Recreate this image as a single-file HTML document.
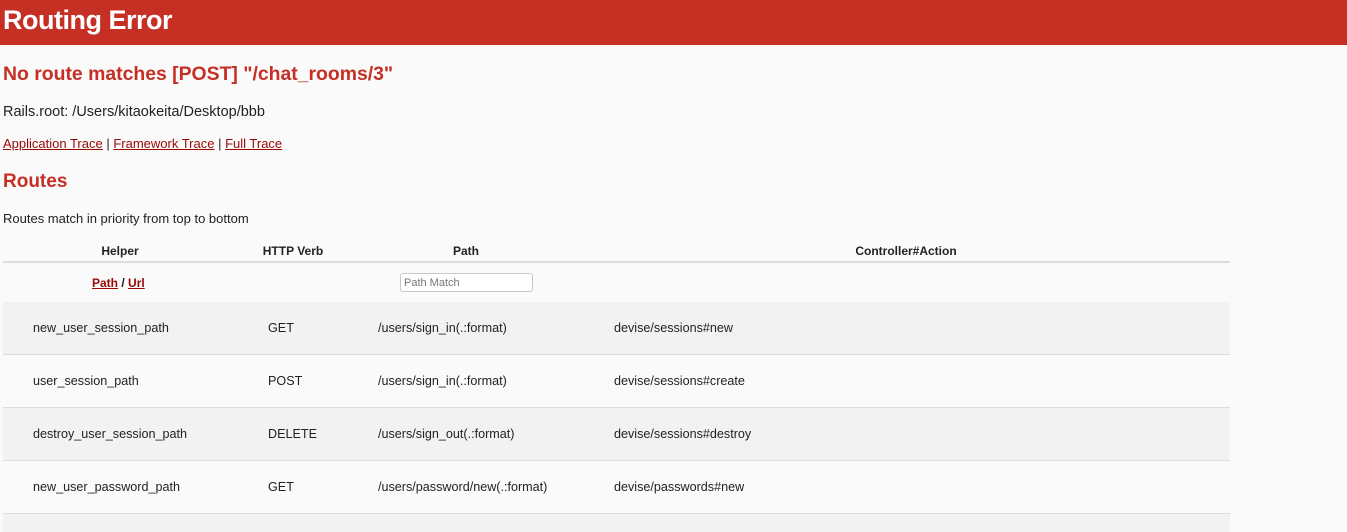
<!DOCTYPE html>
<html><head><meta charset="utf-8"><style>
*{margin:0;padding:0;box-sizing:border-box}
html,body{width:1347px;height:532px;overflow:hidden}
body{background:#fafafa;font-family:"Liberation Sans",Arial,sans-serif;color:#222;position:relative}
.a{position:absolute;white-space:nowrap}
.hdr{position:absolute;left:0;top:0;width:1347px;height:45px;background:#c52f24}
.red{color:#c52f24;font-weight:bold}
a{color:#980905;text-decoration:underline}
.row{position:absolute;left:3px;width:1227px;height:53px;border-bottom:1px solid #ddd}
.row span{position:absolute;top:19px;font-size:12.6px;color:#222}
.th{position:absolute;top:244px;font-size:12px;font-weight:bold;transform:translateX(-50%)}
</style></head><body>
<div class="hdr"></div>
<div class="a" style="left:3px;top:5px;font-size:27px;font-weight:bold;color:#fff;letter-spacing:-0.5px">Routing Error</div>
<div class="a red" style="left:3px;top:63px;font-size:19.4px">No route matches [POST] "/chat_rooms/3"</div>
<div class="a" style="left:3px;top:104px;font-size:14.5px">Rails.root: /Users/kitaokeita/Desktop/bbb</div>
<div class="a" style="left:3px;top:136px;font-size:13px"><a>Application Trace</a> | <a>Framework Trace</a> | <a>Full Trace</a></div>
<div class="a red" style="left:3px;top:171px;font-size:19px">Routes</div>
<div class="a" style="left:3px;top:211px;font-size:13px">Routes match in priority from top to bottom</div>
<div class="th" style="left:120px">Helper</div>
<div class="th" style="left:293px">HTTP Verb</div>
<div class="th" style="left:466px">Path</div>
<div class="th" style="left:906px">Controller#Action</div>
<div class="a" style="left:3px;top:261px;width:1227px;height:2px;background:#ddd"></div>
<div class="a" style="left:92px;top:276px;font-size:12px;font-weight:bold"><a>Path</a> / <a>Url</a></div>
<div class="a" style="left:400px;top:273px;width:133px;height:19px;border:1px solid #c8c8c8;border-radius:3px;background:#fff;font-size:11px;color:#777;padding:3px 0 0 3px">Path Match</div>
<div class="row" style="top:302px;background:#f2f2f2"><span style="left:30px">new_user_session_path</span><span style="left:265px">GET</span><span style="left:375px">/users/sign_in(.:format)</span><span style="left:611px">devise/sessions#new</span></div>
<div class="row" style="top:355px"><span style="left:30px">user_session_path</span><span style="left:265px">POST</span><span style="left:375px">/users/sign_in(.:format)</span><span style="left:611px">devise/sessions#create</span></div>
<div class="row" style="top:408px;background:#f2f2f2"><span style="left:30px">destroy_user_session_path</span><span style="left:265px">DELETE</span><span style="left:375px">/users/sign_out(.:format)</span><span style="left:611px">devise/sessions#destroy</span></div>
<div class="row" style="top:461px"><span style="left:30px">new_user_password_path</span><span style="left:265px">GET</span><span style="left:375px">/users/password/new(.:format)</span><span style="left:611px">devise/passwords#new</span></div>
<div class="a" style="left:3px;top:514px;width:1227px;height:18px;background:#f2f2f2"></div>
</body></html>
